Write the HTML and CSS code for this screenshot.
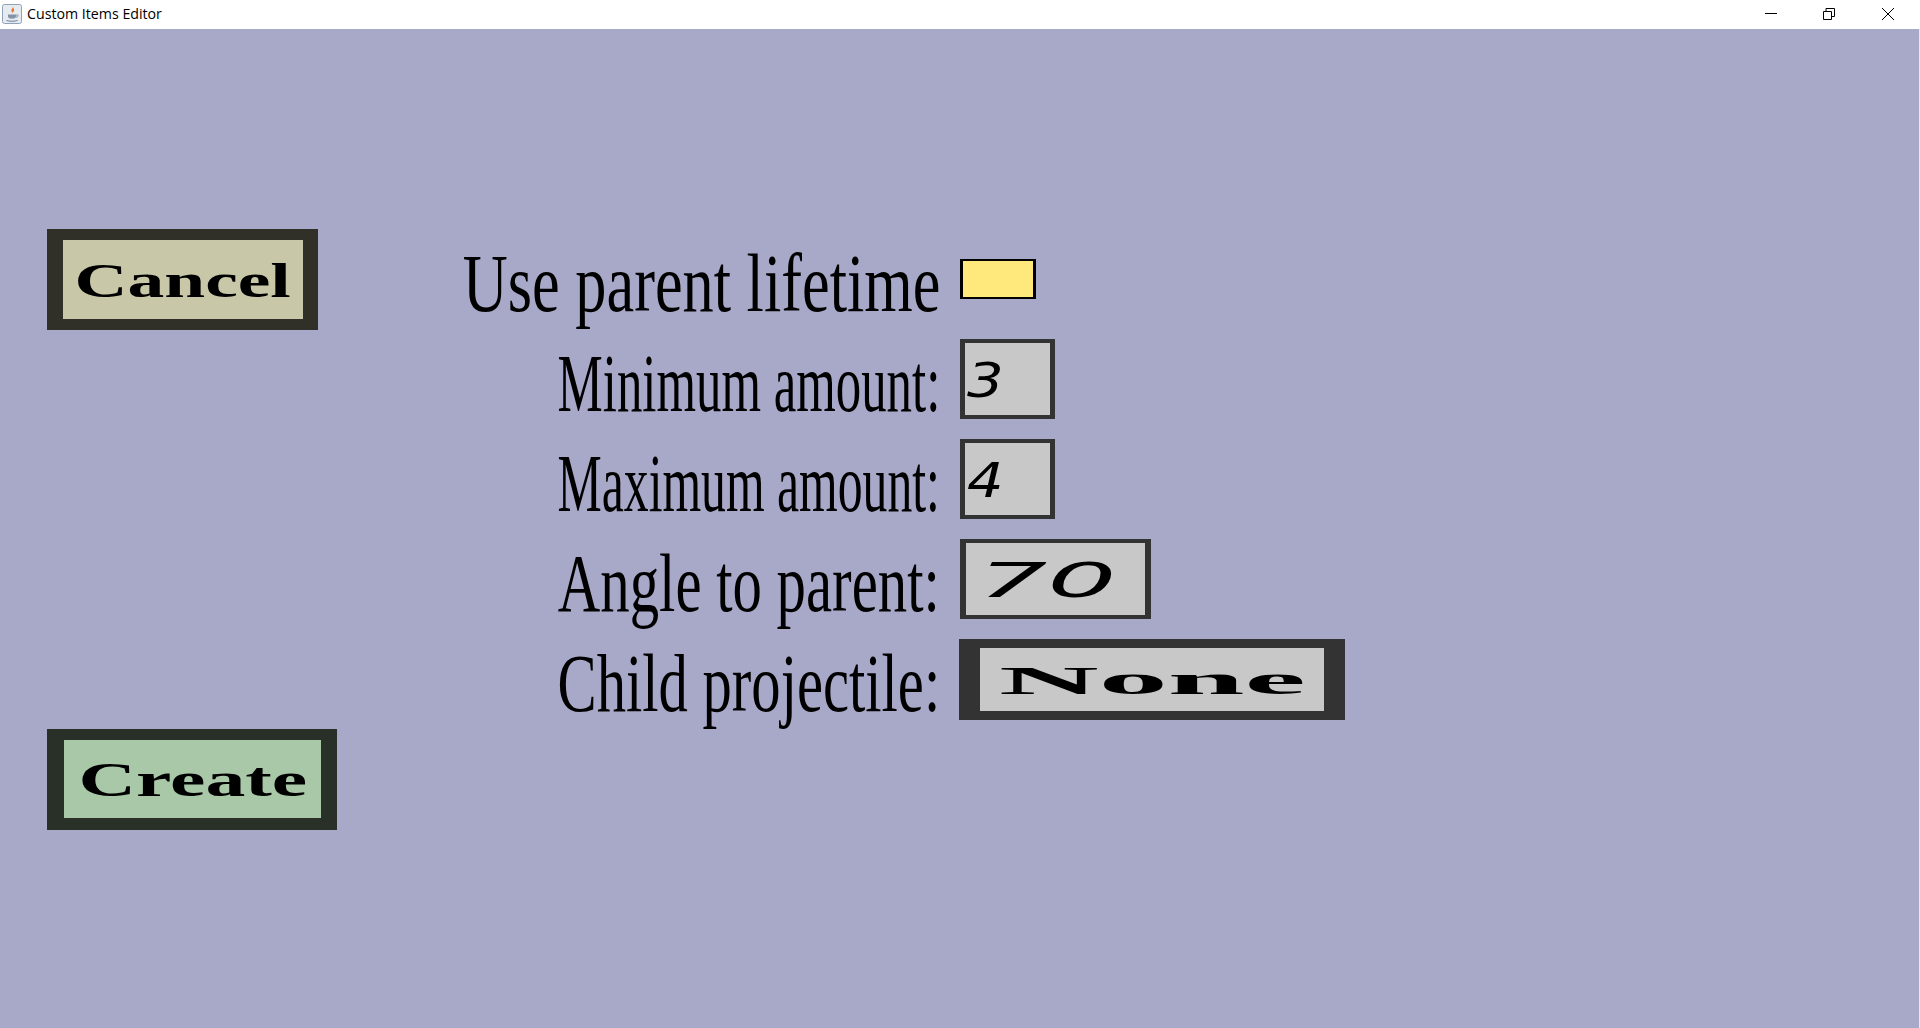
FILE: index.html
```html
<!DOCTYPE html>
<html lang="en">
<head>
<meta charset="utf-8">
<title>Custom Items Editor</title>
<link rel="stylesheet" href="styles.css">
</head>
<body>
<header class="titlebar">
  <div class="title-left">
    <svg class="app-icon" viewBox="0 0 20 20" aria-hidden="true">
      <rect x="0.5" y="0.5" width="19" height="19" rx="2" fill="#e6ebf1" stroke="#8fa2b8"/>
      <path d="M10.5 2.500c1 1.800-1.800 2.800-1 4.800.3.800 1 1.300 1.300 2.200-.1-1 .2-1.600 1-2.300.8-.7.500-2.300-1.300-4.700z" fill="#e07a3a"/>
      <path d="M6 10.500h8v1.800c0 1.700-1.500 2.500-4 2.500s-4-.8-4-2.500z" fill="#8494a6"/>
      <path d="M4.500 16.500c3 1 8 1 11 0" fill="none" stroke="#6d8299" stroke-width="1"/>
      <path d="M14 11h1.500c1 0 1 2-1.500 2.200" fill="none" stroke="#8494a6"/>
    </svg>
    <span class="title-text">Custom Items Editor</span>
  </div>
  <div class="window-controls">
    <svg class="win-icon" viewBox="0 0 12 12" aria-hidden="true"><path d="M0 5.500h12" stroke="#000" fill="none"/></svg>
    <svg class="win-icon" viewBox="0 0 12 12" aria-hidden="true"><path d="M.5 3.500h8v8h-8zM3 3.500V.5h8.500v8H8.500" stroke="#000" fill="none"/></svg>
    <svg class="win-icon win-close" viewBox="0 0 12 12" aria-hidden="true"><path d="M0 0l12 12M12 0L0 12" stroke="#000" fill="none"/></svg>
  </div>
</header>
<main class="canvas">
  <div class="actions">
    <button class="btn btn-cancel"><span class="stretch s-cancel">Cancel</span></button>
    <button class="btn btn-create"><span class="stretch s-create">Create</span></button>
  </div>
  <div class="form">
    <div class="label"><span class="stretch-label l-use">Use parent lifetime</span></div>
    <div class="control"><div class="check"></div></div>
    <div class="label"><span class="stretch-label l-min">Minimum amount:</span></div>
    <div class="control"><div class="field f-small"><span class="val v-digit">3</span></div></div>
    <div class="label"><span class="stretch-label l-max">Maximum amount:</span></div>
    <div class="control"><div class="field f-small"><span class="val v-digit">4</span></div></div>
    <div class="label"><span class="stretch-label l-angle">Angle to parent:</span></div>
    <div class="control"><div class="field f-wide"><span class="val v-wide">70</span></div></div>
    <div class="label"><span class="stretch-label l-child">Child projectile:</span></div>
    <div class="control"><button class="select"><span class="stretch s-none">None</span></button></div>
  </div>
</main>
</body>
</html>
```
FILE: styles.css
```css
* { box-sizing: border-box; }
html, body { margin: 0; height: 100%; }
body { display: flex; flex-direction: column; background: #a8a8c8; overflow: hidden; }

.titlebar {
  height: 29px; flex: none; background: #fff; display: flex; padding-bottom: 1px;
  justify-content: space-between; align-items: center;
}
.title-left { display: flex; align-items: center; padding-left: 2px; gap: 5px; }
.app-icon { width: 20px; height: 20px; display: block; }
.title-text { font: 14.2px/20px "Open Sans", sans-serif; color: #000; }
.window-controls { display: flex; gap: 46px; padding-right: 26px; }
.win-icon { width: 12px; height: 12px; display: block; }
.win-close { margin-left: 1px; }

.canvas { flex: 1; display: flex; padding: 200px 0 0 47px; border-right: 1px solid #e8e8f0; }
.actions { width: 272px; flex: none; display: flex; flex-direction: column; }
.btn {
  padding: 2px 0 0; margin: 0; height: 101px; display: flex; align-items: center;
  justify-content: center; font: bold 48px/1 "Liberation Serif", serif; color: #000;
  border-style: solid;
}
.btn-cancel { width: 271px; background: #c8c8a8; border-color: #303028; border-width: 11px 15px 11px 16px; }
.btn-create { width: 290px; margin-top: 399px; background: #a8c8a8; border-color: #283028; border-width: 11px 16px 12px 17px; }

.stretch { display: inline-block; white-space: nowrap; flex: none; }
.s-cancel { transform: scaleX(1.53); }
.s-create { transform: scaleX(1.66); }
.s-none { transform: scaleX(3.45); }

.form {
  display: grid; grid-template-columns: 621px auto;
  grid-auto-rows: 100px; column-gap: 20px; justify-content: start; margin-top: 10px;
}
.label { display: flex; justify-content: flex-end; align-items: center; height: 100px; padding-bottom: 10px; }
.stretch-label {
  font: 82px/88px "Liberation Serif", serif; color: #000; white-space: nowrap; flex: none;
  transform-origin: right center; display: inline-block;
}
.l-use { transform: scaleX(.76); }
.l-min { transform: scaleX(.62); }
.l-max { transform: scaleX(.606); }
.l-angle { transform: scaleX(.717); }
.l-child { transform: scaleX(.715); }

.control { display: flex; align-items: flex-start; }
.check { width: 76px; height: 40px; background: #ffe87c; border: solid #000; border-width: 2px 3px; margin-top: 20px; }
.field { height: 80px; background: #c8c8c8; border: solid #333; display: flex; align-items: center; padding-top: 2px; }
.f-small { width: 95px; border-width: 4px 5px; }
.f-wide { width: 191px; border-width: 4px 6px; }
.val { display: inline-block; font: oblique 48px/1 "DejaVu Sans", sans-serif; color: #000; transform-origin: left center; }
.v-digit { margin-left: 2px; transform: scaleX(1.2); }
.v-wide { margin-left: 12px; transform: scaleX(2.27); }
.select {
  width: 386px; height: 81px; padding: 2px 0 0; margin: 0 0 0 -1px; background: #c8c8c8;
  border: solid #333; border-width: 9px 21px; display: flex; align-items: center; justify-content: center;
  font: bold 40px/1 "Liberation Serif", serif; color: #000;
}
```
